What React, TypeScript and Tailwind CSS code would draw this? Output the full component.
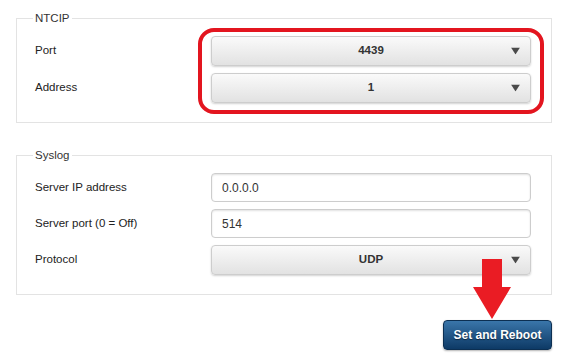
import React from 'react';

function Caret() {
  return (
    <svg width="9" height="7" viewBox="0 0 9 7" className="absolute right-[10px] top-1/2 -translate-y-1/2">
      <polygon points="0,0 9,0 4.5,7" fill="#4a4a4a" />
    </svg>
  );
}

function SelectBox({ value }: { value: string }) {
  return (
    <div className="relative w-[320px] h-[30px] flex items-center justify-center rounded-[4px] border border-[#cdcdcd] bg-gradient-to-b from-[#fafafa] to-[#e2e2e2] shadow-[0_1px_2px_rgba(0,0,0,0.18)] text-[11.5px] font-bold text-[#333]">
      {value}
      <Caret />
    </div>
  );
}

function TextBox({ value }: { value: string }) {
  return (
    <div className="w-[320px] h-[29px] flex items-center px-[10px] rounded-[4px] border border-[#cdcdcd] bg-white shadow-[inset_0_1px_2px_rgba(0,0,0,0.12)] text-[12px] text-[#333]">
      {value}
    </div>
  );
}

function Row({ label, children }: { label: string; children: React.ReactNode }) {
  return (
    <div className="flex items-center">
      <div className="w-[176px] text-[11.5px] text-[#222]">{label}</div>
      {children}
    </div>
  );
}

export default function App() {
  return (
    <div
      className="relative w-[580px] h-[353px] bg-white overflow-hidden"
      style={{ fontFamily: '"Liberation Sans", Arial, sans-serif' }}
    >
      <div className="pl-[16px] w-[552px]">
        <fieldset className="mt-[11px] border border-[#e3e3e3] px-[18px] pb-[19px]">
          <legend className="px-[2px] -ml-[2px] text-[11.5px] leading-[14px] text-[#333]">NTCIP</legend>
          <div className="mt-[11px] flex flex-col gap-[7px]">
            <Row label="Port">
              <SelectBox value="4439" />
            </Row>
            <Row label="Address">
              <SelectBox value="1" />
            </Row>
          </div>
        </fieldset>

        <fieldset className="mt-[25px] border border-[#e3e3e3] px-[18px] pb-[19px]">
          <legend className="px-[2px] -ml-[2px] text-[11.5px] leading-[14px] text-[#333]">Syslog</legend>
          <div className="mt-[11px] flex flex-col gap-[7px]">
            <Row label="Server IP address">
              <TextBox value="0.0.0.0" />
            </Row>
            <Row label="Server port (0 = Off)">
              <TextBox value="514" />
            </Row>
            <Row label="Protocol">
              <SelectBox value="UDP" />
            </Row>
          </div>
        </fieldset>

        <div className="mt-[25px] flex justify-end">
          <button className="w-[109px] h-[30px] rounded-[4px] border border-[#0c2f52] bg-gradient-to-b from-[#3a76aa] to-[#0d3a66] text-white text-[12px] font-bold [text-shadow:0_1px_1px_rgba(0,0,0,0.5)] shadow-[0_1px_2px_rgba(0,0,0,0.3)]">
            Set and Reboot
          </button>
        </div>
      </div>

      {/* annotation: red highlight around NTCIP selects */}
      <div className="absolute left-[198px] top-[28px] w-[346px] h-[86px] rounded-[16px] border-[4px] border-[#e3151f] pointer-events-none" />

      {/* annotation: red arrow pointing to the button */}
      <svg className="absolute left-[473px] top-[259px]" width="38" height="60" viewBox="0 0 38 60">
        <polygon points="9,0 29,0 29,28 38,28 19,60 0,28 9,28" fill="#ea1c24" />
      </svg>
    </div>
  );
}
